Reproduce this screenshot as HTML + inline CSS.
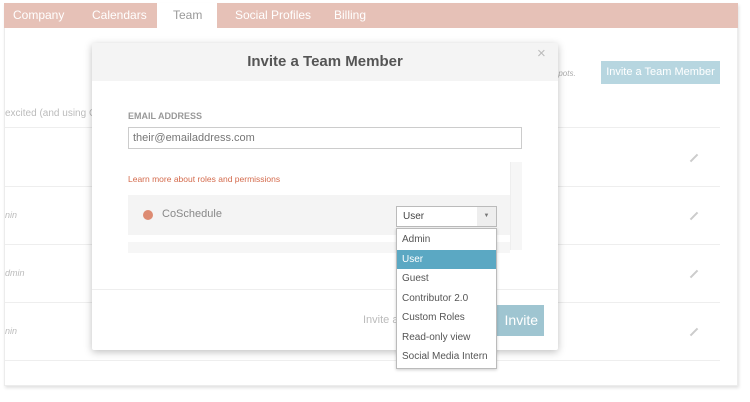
<!DOCTYPE html>
<html><head><style>
*{margin:0;padding:0;box-sizing:border-box}
body{width:750px;height:402px;background:#fff;font-family:"Liberation Sans",sans-serif;position:relative;overflow:hidden}
.abs{position:absolute}
.wrap{left:4px;top:3px;width:734px;height:383px;border:1px solid #ececec;box-shadow:1px 2px 3px rgba(0,0,0,.12);background:#fff}
.tabs{left:4px;top:3px;width:734px;height:25px;background:#e6c1b7}
.tab{top:3px;height:25px;line-height:24px;color:#fff;font-size:12px}
.sep{left:5px;width:715px;height:1px;background:#eee}
.pen{left:689px;width:10px;height:2px;background:#ccc;transform:rotate(-45deg)}
.lt{left:5px;font-size:9px;color:#bbb;font-style:italic}
.modal{left:92px;top:43px;width:466px;height:307px;background:#fff;box-shadow:0 2px 8px rgba(0,0,0,.25);border-radius:2px}
.dd div{height:19.5px;line-height:19.5px;padding-left:5px;font-size:10px;color:#555}
</style></head><body>
<div class="abs wrap"></div>
<div class="abs tabs"></div>
<div class="abs" style="left:157px;top:3px;width:60px;height:25px;background:#fff"></div>
<div class="abs tab" style="left:13px">Company</div>
<div class="abs tab" style="left:92px">Calendars</div>
<div class="abs tab" style="left:173px;color:#999">Team</div>
<div class="abs tab" style="left:235px">Social Profiles</div>
<div class="abs tab" style="left:334px">Billing</div>
<div class="abs" style="left:545px;top:69px;font-size:8px;color:#aaa;font-style:italic">er spots.</div>
<div class="abs" style="left:601px;top:61px;width:119px;height:23px;background:#b7d6e0;color:#fff;font-size:11px;line-height:23px;text-align:center">Invite a Team Member</div>
<div class="abs lt" style="top:108px;font-size:10px;font-style:normal">excited (and using Co</div>
<div class="abs sep" style="top:127px"></div>
<div class="abs sep" style="top:186px"></div>
<div class="abs sep" style="top:244px"></div>
<div class="abs sep" style="top:302px"></div>
<div class="abs sep" style="top:360px"></div>
<div class="abs lt" style="top:210px">nin</div>
<div class="abs lt" style="top:268px">dmin</div>
<div class="abs lt" style="top:326px">nin</div>
<div class="abs pen" style="top:157px"></div>
<div class="abs pen" style="top:215px"></div>
<div class="abs pen" style="top:273px"></div>
<div class="abs pen" style="top:331px"></div>
<div class="abs modal">
 <div class="abs" style="left:0;top:0;width:466px;height:38px;background:#f4f4f4;text-align:center;line-height:38px;font-size:15px;font-weight:bold;color:#555">Invite a Team Member</div>
 <div class="abs" style="left:445px;top:2px;font-size:15px;color:#bbb">×</div>
 <div class="abs" style="left:36px;top:68px;font-size:9px;font-weight:bold;color:#999">EMAIL ADDRESS</div>
 <div class="abs" style="left:36px;top:84px;width:394px;height:22px;border:1px solid #ccc;font-size:11px;color:#777;line-height:20px;padding-left:4px">their@emailaddress.com</div>
 <div class="abs" style="left:418px;top:119px;width:12px;height:88px;background:#f6f6f6;border-left:1px solid #eee"></div>
 <div class="abs" style="left:36px;top:131px;font-size:8.5px;color:#d46b4d">Learn more about roles and permissions</div>
 <div class="abs" style="left:36px;top:152px;width:382px;height:40px;background:#f4f4f4"></div>
 <div class="abs" style="left:36px;top:199px;width:382px;height:11px;background:#f6f6f6"></div>
 <div class="abs" style="left:51px;top:167px;width:10px;height:10px;border-radius:50%;background:#dd8b72"></div>
 <div class="abs" style="left:70px;top:165px;font-size:11px;color:#888">CoSchedule</div>
 <div class="abs" style="left:0;top:246px;width:466px;height:1px;background:#eee"></div>
 <div class="abs" style="left:271px;top:271px;font-size:11px;color:#bbb">Invite a</div>
 <div class="abs" style="left:405px;top:262px;width:47px;height:31px;background:#9fc5d1;color:#fff;font-size:14px;line-height:31px;text-align:right;padding-right:6px">Invite</div>
</div>
<div class="abs" style="left:396px;top:206px;width:101px;height:21px;background:#fff;border:1px solid #bbb;font-size:10px;color:#444;line-height:19px;padding-left:6px">User<div class="abs" style="right:0;top:0;width:19px;height:19px;background:#eee;font-size:6px;text-align:center;color:#777">▼</div></div>
<div class="abs dd" style="left:396px;top:228px;width:101px;height:141px;background:#fff;border:1px solid #bbb;box-shadow:0 1px 3px rgba(0,0,0,.2);padding-top:1px">
 <div>Admin</div><div style="background:#5ba8c3;color:#fff">User</div><div>Guest</div><div>Contributor 2.0</div><div>Custom Roles</div><div>Read-only view</div><div>Social Media Intern</div>
</div>
</body></html>
